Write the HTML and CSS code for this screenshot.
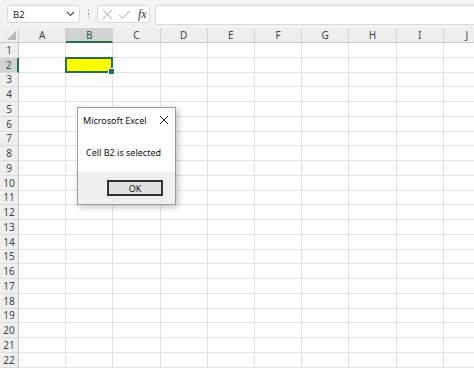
FILE: index.html
```html
<!DOCTYPE html>
<html lang="en">
<head>
    <meta charset="UTF-8">
    <meta name="viewport" content="width=device-width, initial-scale=1.0">
    <title>Excel - Cell B2</title>
    <link rel="stylesheet" href="styles.css">
</head>
<body>
    <div class="toolbar">
        <div class="name-box">
            <span>B2</span>
            <svg class="chevron" width="9" height="6" viewBox="0 0 9 6"><path d="M1 1 L4.5 4.5 L8 1" fill="none" stroke="#555" stroke-width="1.1"/></svg>
        </div>
        <div class="dots"><i></i><i></i><i></i></div>
        <div class="fx-box">
            <svg width="11" height="11" viewBox="0 0 11 11"><path d="M1 1 L10 10 M10 1 L1 10" stroke="#c4c4c4" stroke-width="1.1"/></svg>
            <svg width="13" height="11" viewBox="0 0 13 11"><path d="M1 6 L4.5 9.5 L12 1.5" fill="none" stroke="#c4c4c4" stroke-width="1.1"/></svg>
            <span class="fx">fx</span>
        </div>
        <div class="formula-input"></div>
    </div>

    <div class="sheet" id="sheet"></div>

    <div class="dialog">
        <div class="dialog-title">
            <span>Microsoft Excel</span>
            <svg width="10" height="10" viewBox="0 0 10 10"><path d="M1 1 L9 9 M9 1 L1 9" stroke="#222" stroke-width="1"/></svg>
        </div>
        <div class="dialog-body">Cell B2 is selected</div>
        <div class="dialog-footer">
            <button type="button">OK</button>
        </div>
    </div>

    <script>
        const columns = ['A', 'B', 'C', 'D', 'E', 'F', 'G', 'H', 'I', 'J'];
        const sheet = document.getElementById('sheet');

        // fila de encabezados
        const corner = document.createElement('div');
        corner.className = 'corner';
        sheet.appendChild(corner);
        columns.forEach(col => {
            const head = document.createElement('div');
            head.className = 'col-head' + (col === 'B' ? ' active' : '');
            head.textContent = col;
            sheet.appendChild(head);
        });

        // filas 1 a 22
        for (let row = 1; row <= 22; row++) {
            const head = document.createElement('div');
            head.className = 'row-head' + (row === 2 ? ' active' : '');
            head.textContent = row;
            sheet.appendChild(head);
            columns.forEach(col => {
                const cell = document.createElement('div');
                cell.className = 'cell';
                if (col === 'B' && row === 2) {
                    cell.className += ' selected';
                }
                sheet.appendChild(cell);
            });
        }
    </script>
</body>
</html>
```

FILE: styles.css
```css
body {
    margin: 0;
    width: 474px;
    height: 370px;
    overflow: hidden;
    background: #fff;
    font-family: "Noto Sans", "Open Sans", sans-serif;
    position: relative;
}

.toolbar {
    height: 28px;
    box-sizing: border-box;
    padding: 5px 0 0 7px;
    background: #f3f3f3;
    display: flex;
    align-items: flex-start;
}

.name-box {
    width: 73px;
    height: 18px;
    box-sizing: border-box;
    background: #fff;
    border: 1px solid #dadada;
    border-radius: 3px;
    display: flex;
    align-items: center;
    justify-content: space-between;
    padding: 0 4px 0 5px;
    font-size: 9.5px;
    color: #222;
}

.dots {
    width: 17px;
    height: 18px;
    display: flex;
    flex-direction: column;
    align-items: center;
    justify-content: center;
    gap: 2px;
}

.dots i {
    width: 1.5px;
    height: 1.5px;
    background: #888;
}

.fx-box {
    width: 53px;
    height: 18px;
    box-sizing: border-box;
    background: #fff;
    border: 1px solid #dadada;
    border-radius: 3px;
    display: flex;
    align-items: center;
    gap: 5px;
    padding-left: 4px;
}

.fx {
    font-family: "Liberation Serif", serif;
    font-style: italic;
    font-size: 12px;
    color: #333;
    margin-left: 2px;
}

.formula-input {
    flex: 1;
    height: 18px;
    margin-left: 5px;
    background: #fff;
    border: 1px solid #dadada;
    border-right: none;
    border-radius: 3px 0 0 3px;
}

.sheet {
    display: grid;
    grid-template-columns: 19px repeat(10, 47.2px);
    grid-template-rows: 15px;
    grid-auto-rows: 14.76px;
    font-size: 10px;
    color: #444;
}

.corner, .col-head, .row-head {
    background: #efefef;
    box-sizing: border-box;
    display: flex;
    align-items: center;
    justify-content: center;
}

.corner {
    border-right: 1px solid #c8c8c8;
    border-bottom: 1px solid #c8c8c8;
    position: relative;
}

.corner::after {
    content: "";
    position: absolute;
    right: 2px;
    bottom: 2px;
    border-left: 9px solid transparent;
    border-bottom: 9px solid #b7b7b7;
}

.col-head {
    border-right: 1px solid #d4d4d4;
    border-bottom: 1px solid #c8c8c8;
}

.row-head {
    border-right: 1px solid #c8c8c8;
    border-bottom: 1px solid #dedede;
}

.col-head.active {
    background: #d2d2d2;
    border-bottom: 2px solid #217346;
    color: #1e5e3b;
}

.row-head.active {
    background: #d2d2d2;
    border-right: 2px solid #217346;
    color: #1e5e3b;
}

.cell {
    box-sizing: border-box;
    border-right: 1px solid #e2e2e2;
    border-bottom: 1px solid #e2e2e2;
}

.cell.selected {
    background: #ffff00;
    border: 2px solid #217346;
    margin: -1px 0 0 -1px;
    position: relative;
}

.cell.selected::after {
    content: "";
    position: absolute;
    right: -4px;
    bottom: -4px;
    width: 5px;
    height: 5px;
    background: #217346;
    border: 1px solid #fff;
}

.dialog {
    position: absolute;
    left: 77px;
    top: 107px;
    width: 99px;
    box-sizing: border-box;
    background: #fff;
    border: 1px solid #9a9a9a;
    box-shadow: 2px 2px 6px rgba(0,0,0,0.25);
    font-size: 9px;
    color: #111;
}

.dialog-title {
    height: 24px;
    display: flex;
    align-items: center;
    justify-content: space-between;
    padding: 0 6px 0 5px;
}

.dialog-body {
    height: 40px;
    padding-left: 8px;
    display: flex;
    align-items: center;
}

.dialog-footer {
    height: 32px;
    background: #f0f0f0;
    display: flex;
    justify-content: flex-end;
    align-items: center;
    padding-right: 12px;
}

button {
    width: 56px;
    height: 16px;
    padding: 0;
    background: #e1e1e1;
    border: 2px solid #333;
    font-family: inherit;
    font-size: 9px;
    color: #111;
}
```
